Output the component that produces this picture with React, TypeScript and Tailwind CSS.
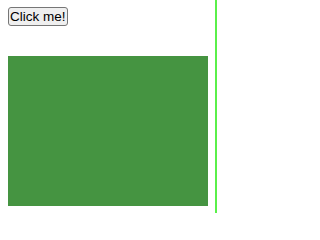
export default function App() {
  return (
    <div className="w-[217px] h-[213px] flex bg-white" style={{ fontFamily: '"Liberation Sans", Arial, sans-serif' }}>
      <div className="w-[215px] pt-[7px] pl-[8px] flex flex-col items-start">
        <button className="text-[13.5px] leading-[17px] px-[1px] border border-[#767676] rounded-[3px] bg-[#efefef] text-black">
          Click me!
        </button>
        <div className="mt-[30px] w-[200px] h-[150px] bg-[#459441]" />
      </div>
      <div className="w-[2px] h-full bg-[#5af04a]" />
    </div>
  );
}
